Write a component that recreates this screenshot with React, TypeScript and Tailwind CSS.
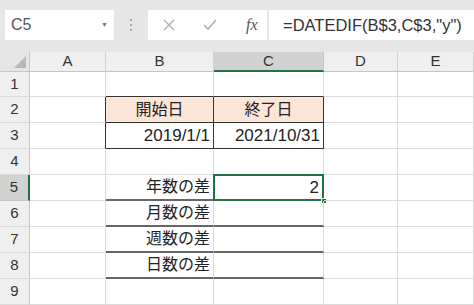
import React from 'react';

const cols = ['A', 'B', 'C', 'D', 'E'];
const font = { fontFamily: '"Liberation Sans", "Noto Sans CJK JP", Arial, sans-serif' };

type CellProps = { className?: string; children?: React.ReactNode };

const Cell: React.FC<CellProps> = ({ className = '', children }) => (
  <div className={`relative flex items-center border-r border-b border-[#dadada] px-[3px] text-[16px] text-[#222] ${className}`}>
    {children}
  </div>
);

const RowHead: React.FC<{ n: number; active?: boolean }> = ({ n, active }) => (
  <div
    className={`flex items-center justify-center border-b text-[15px] ${
      active
        ? 'bg-[#d2d2d2] border-r-2 border-r-[#217346] border-b-[#c6c6c6] text-[#333]'
        : 'bg-[#efefef] border-r border-r-[#c6c6c6] border-b-[#dadada] text-[#333]'
    }`}
  >
    {n}
  </div>
);

const labels = ['年数の差', '月数の差', '週数の差', '日数の差'];

export default function App() {
  return (
    <div className="w-[474px] h-[305px] overflow-hidden bg-white" style={font}>
      {/* formula bar */}
      <div className="h-[52px] bg-[#e6e6e6] flex items-start pt-[10px] pl-[5px]">
        <div className="w-[109px] h-[30px] bg-white flex items-center justify-between pl-[6px] pr-[6px]">
          <span className="text-[16px] text-[#555]">C5</span>
          <span className="text-[7px] text-[#777]">▼</span>
        </div>
        <div className="w-[34px] h-[30px] flex flex-col items-center justify-center gap-[3px]">
          <span className="block w-[2px] h-[2px] bg-[#aaa]" />
          <span className="block w-[2px] h-[2px] bg-[#aaa]" />
          <span className="block w-[2px] h-[2px] bg-[#aaa]" />
        </div>
        <div className="flex-1 h-[30px] flex">
          <div className="w-[119px] h-full bg-white flex items-center">
            <svg width="14" height="14" viewBox="0 0 14 14" className="ml-[14px]">
              <path d="M2 2 L12 12 M12 2 L2 12" stroke="#b0b0b0" strokeWidth="1.4" fill="none" />
            </svg>
            <svg width="16" height="14" viewBox="0 0 16 14" className="ml-[26px]">
              <path d="M2 7 L6 11 L14 2" stroke="#b0b0b0" strokeWidth="1.6" fill="none" />
            </svg>
            <span className="ml-[28px] text-[16px] italic text-[#555]" style={{ fontFamily: '"Liberation Serif", serif' }}>
              fx
            </span>
          </div>
          <div className="w-[2px] h-full bg-[#e6e6e6]" />
          <div className="flex-1 h-full bg-white flex items-center pl-[14px] text-[16.5px] text-[#333]">
            =DATEDIF(B$3,C$3,"y")
          </div>
        </div>
      </div>

      {/* grid */}
      <div className="grid grid-cols-[30px_76px_108px_110px_74px_76px] grid-rows-[20px_25px_26px_26px_26px_26px_26px_26px_26px_26px]">
        {/* header row */}
        <div className="relative bg-[#e6e6e6] border-r border-b border-[#c6c6c6]">
          <div
            className="absolute right-[3px] bottom-[3px] w-0 h-0 border-l-[12px] border-l-transparent border-b-[12px] border-b-[#b8b8b8]"
          />
        </div>
        {cols.map((c) => (
          <div
            key={c}
            className={`flex items-center justify-center text-[15px] text-[#333] border-r ${
              c === 'C'
                ? 'bg-[#d2d2d2] border-b-2 border-b-[#217346] border-r-[#c6c6c6]'
                : 'bg-[#efefef] border-b border-b-[#c6c6c6] border-r-[#d0d0d0]'
            }`}
          >
            {c}
          </div>
        ))}

        {/* row 1 */}
        <RowHead n={1} />
        <Cell />
        <Cell className="border-b-[#333]" />
        <Cell className="border-b-[#333]" />
        <Cell />
        <Cell />

        {/* row 2 */}
        <RowHead n={2} />
        <Cell className="border-r-[#333]" />
        <Cell className="justify-center bg-[#fce4d6] border-r-[#333] border-b-[#333]">開始日</Cell>
        <Cell className="justify-center bg-[#fce4d6] border-r-[#333] border-b-[#333]">終了日</Cell>
        <Cell />
        <Cell />

        {/* row 3 */}
        <RowHead n={3} />
        <Cell className="border-r-[#333]" />
        <Cell className="justify-end text-[17px] border-r-[#333] border-b-[#333]">2019/1/1</Cell>
        <Cell className="justify-end text-[17px] border-r-[#333] border-b-[#333]">2021/10/31</Cell>
        <Cell />
        <Cell />

        {/* row 4 */}
        <RowHead n={4} />
        <Cell />
        <Cell />
        <Cell />
        <Cell />
        <Cell />

        {/* rows 5-8 */}
        {labels.map((l, i) => {
          const row = i + 5;
          const sel = row === 5;
          return (
            <React.Fragment key={l}>
              <RowHead n={row} active={sel} />
              <Cell />
              <Cell className="justify-end border-b-2 border-b-[#666]">{l}</Cell>
              <Cell className={`justify-end ${sel ? '' : 'border-b-2 border-b-[#666]'}`}>
                {sel && (
                  <>
                    <div className="absolute left-[-1px] top-[-1px] right-[-1px] bottom-[-1px] border-2 border-[#217346]" />
                    <span className="relative pr-[1px] text-[17px]">2</span>
                    <div className="absolute right-[-4px] bottom-[-4px] w-[6px] h-[6px] bg-[#217346] border border-white" />
                  </>
                )}
              </Cell>
              <Cell />
              <Cell />
            </React.Fragment>
          );
        })}

        {/* row 9 */}
        <RowHead n={9} />
        <Cell />
        <Cell />
        <Cell />
        <Cell />
        <Cell />
      </div>
    </div>
  );
}
